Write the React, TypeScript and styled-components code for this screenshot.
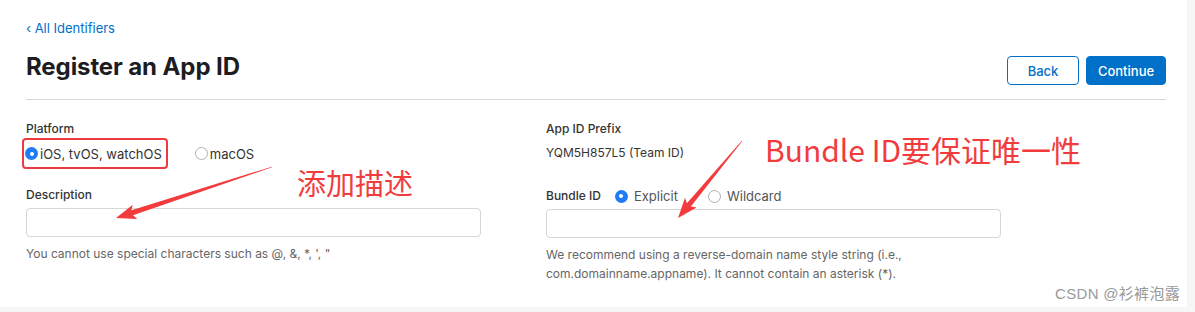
import * as React from 'react';
import styled, { createGlobalStyle } from 'styled-components';

const GlobalStyle = createGlobalStyle`
	html, body {
		margin: 0;
		padding: 0;
		background: #f6f6f6;
	}
	body {
		font-family: Inter, "Liberation Sans", "Noto Sans CJK SC", sans-serif;
		color: #333;
	}
`;

const Page = styled.div`
	position: relative;
	width: 1187px;
	height: 307px;
	background: #fff;
	padding: 0 21px 0 26px;
	box-sizing: border-box;
	overflow: hidden;
`;

const BackLink = styled.a`
	display: block;
	margin-top: 20px;
	height: 17px;
	line-height: 17px;
	font-size: 13px;
	color: #0070c9;
	text-decoration: none;
`;

const Header = styled.div`
	display: flex;
	justify-content: space-between;
	align-items: flex-start;
	margin-top: 19px;
	padding-bottom: 14px;
	border-bottom: 1px solid #d6d6d6;
`;

const Title = styled.h1`
	margin: 0;
	font-size: 24px;
	line-height: 22px;
	font-weight: 700;
	color: #1d1d1f;
	letter-spacing: -0.1px;
`;

const Actions = styled.div`
	display: flex;
	gap: 7px;
`;

const Button = styled.button<{ primary?: boolean }>`
	height: 29px;
	padding: 0;
	width: ${p => (p.primary ? '80px' : '72px')};
	border-radius: 4px;
	border: 1px solid #0070c9;
	background: ${p => (p.primary ? '#0070c9' : '#fff')};
	color: ${p => (p.primary ? '#fff' : '#0070c9')};
	font-family: inherit;
	font-size: 13px;
	font-weight: 500;
`;

const Form = styled.div`
	display: grid;
	grid-template-columns: 520px 1fr;
	margin-top: 21px;
`;

const Column = styled.div`
	display: flex;
	flex-direction: column;
`;

const Label = styled.div<{ gap?: number }>`
	font-size: 12px;
	line-height: 16px;
	font-weight: 500;
	color: #333;
	margin-top: ${p => p.gap || 0}px;
`;

const Value = styled.div`
	font-size: 12px;
	line-height: 16px;
	color: #333;
	margin-top: 8px;
`;

const RadioRow = styled.div`
	display: flex;
	align-items: center;
	height: 31px;
	margin-top: 1px;
	margin-left: -4px;
`;

const Option = styled.label<{ highlighted?: boolean; spacing?: number }>`
	display: flex;
	align-items: center;
	box-sizing: border-box;
	height: 31px;
	padding: 0 4px 0 1px;
	margin-right: ${p => p.spacing || 0}px;
	border: 2px solid ${p => (p.highlighted ? '#ec3a3f' : 'transparent')};
	border-radius: 4px;
	font-size: 13px;
	color: #333;
`;

const Radio = styled.span<{ checked?: boolean }>`
	width: 13px;
	height: 13px;
	box-sizing: border-box;
	border-radius: 50%;
	margin-right: 2px;
	background: ${p => (p.checked ? '#1f7cf4' : '#fff')};
	border: ${p => (p.checked ? 'none' : '1px solid #b0b0b0')};
	display: flex;
	align-items: center;
	justify-content: center;
	&::after {
		content: '';
		width: 4px;
		height: 4px;
		border-radius: 50%;
		background: #fff;
		display: ${p => (p.checked ? 'block' : 'none')};
	}
`;

const InlineField = styled.div`
	display: flex;
	align-items: center;
	gap: 14px;
	height: 16px;
	margin-top: 27px;
`;

const InlineOption = styled.label`
	display: flex;
	align-items: center;
	gap: 4px;
	font-size: 13px;
	color: #555;
	margin-right: 16px;
`;

const Input = styled.div`
	width: 455px;
	height: 29px;
	box-sizing: border-box;
	margin-top: 5px;
	border: 1px solid #d6d6d6;
	border-radius: 4px;
	background: #fff;
`;

const Help = styled.div`
	margin-top: 7px;
	font-size: 12px;
	line-height: 19px;
	color: #666;
`;

const Note = styled.div<{ x: number; y: number; size: number }>`
	position: absolute;
	left: ${p => p.x}px;
	top: ${p => p.y}px;
	font-size: ${p => p.size}px;
	line-height: 1;
	color: #f23b3d;
	font-family: "Noto Sans CJK SC", "Liberation Sans", sans-serif;
	white-space: nowrap;
`;

const Overlay = styled.svg`
	position: absolute;
	left: 0;
	top: 0;
	pointer-events: none;
`;

const Watermark = styled.div`
	position: absolute;
	right: 7px;
	bottom: 4px;
	font-size: 15px;
	color: #9a9a9a;
	font-family: "Liberation Sans", "Noto Sans CJK SC", sans-serif;
	letter-spacing: 0.3px;
`;

// tapered annotation arrow from tail to tip
const arrowPoints = (tx: number, ty: number, px: number, py: number) => {
	const len = Math.hypot(px - tx, py - ty);
	const dx = (px - tx) / len;
	const dy = (py - ty) / len;
	const nx = -dy;
	const ny = dx;
	const hx = px - dx * 17;
	const hy = py - dy * 17;
	const pt = (x: number, y: number, w: number) =>
		`${(x + nx * w).toFixed(1)},${(y + ny * w).toFixed(1)}`;
	return [
		pt(tx, ty, 0.3),
		pt(hx, hy, 2.6),
		pt(hx - dx * 3, hy - dy * 3, 7.5),
		pt(px, py, 0),
		pt(hx - dx * 3, hy - dy * 3, -7.5),
		pt(hx, hy, -2.6),
		pt(tx, ty, -0.3)
	].join(' ');
};

const App = () => (
	<React.Fragment>
		<GlobalStyle />
		<Page>
			<BackLink>‹ All Identifiers</BackLink>
			<Header>
				<Title>Register an App ID</Title>
				<Actions>
					<Button>Back</Button>
					<Button primary>Continue</Button>
				</Actions>
			</Header>
			<Form>
				<Column>
					<Label>Platform</Label>
					<RadioRow>
						<Option highlighted spacing={24}>
							<Radio checked />
							iOS, tvOS, watchOS
						</Option>
						<Option>
							<Radio />
							macOS
						</Option>
					</RadioRow>
					<Label gap={18}>Description</Label>
					<Input />
					<Help>You cannot use special characters such as @, &amp;, *, ', "</Help>
				</Column>
				<Column>
					<Label>App ID Prefix</Label>
					<Value>YQM5H857L5 (Team ID)</Value>
					<InlineField>
						<Label>Bundle ID</Label>
						<InlineOption>
							<Radio checked />
							Explicit
						</InlineOption>
						<InlineOption>
							<Radio />
							Wildcard
						</InlineOption>
					</InlineField>
					<Input />
					<Help>
						We recommend using a reverse-domain name style string (i.e.,
						<br />
						com.domainname.appname). It cannot contain an asterisk (*).
					</Help>
				</Column>
			</Form>
			<Overlay width={1187} height={307}>
				<polygon points={arrowPoints(272, 167, 116, 218)} fill="#f23b3d" />
				<polygon points={arrowPoints(742, 141, 678, 218)} fill="#f23b3d" />
			</Overlay>
			<Note x={297} y={168} size={29}>添加描述</Note>
			<Note x={765} y={134} size={30}>Bundle ID要保证唯一性</Note>
			<Watermark>CSDN @衫裤泡露</Watermark>
		</Page>
	</React.Fragment>
);

export default App;
